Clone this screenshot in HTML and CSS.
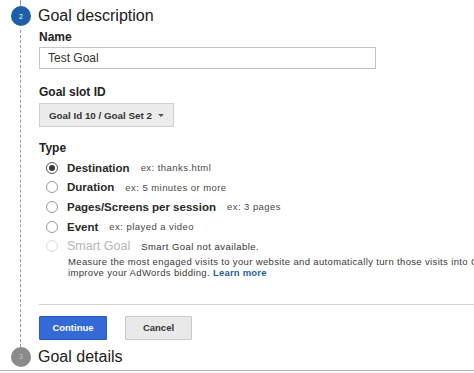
FILE: index.html
```html
<!DOCTYPE html>
<html>
<head>
<meta charset="utf-8">
<link rel="stylesheet" href="styles.css">
</head>
<body>
<div class="page">
  <div class="lead"></div>
  <div class="step-head">
    <span class="dot dot-active">2</span>
    <span class="step-title">Goal description</span>
  </div>
  <div class="step-body">
    <div class="field-label first">Name</div>
    <div class="input">Test Goal</div>
    <div class="field-label">Goal slot ID</div>
    <div class="select">Goal Id 10 / Goal Set 2 <span class="caret"></span></div>
    <div class="field-label type-label">Type</div>
    <div class="radios">
      <div class="radio-row"><span class="radio checked"></span><span class="rlabel">Destination</span><span class="hint">ex: thanks.html</span></div>
      <div class="radio-row"><span class="radio"></span><span class="rlabel">Duration</span><span class="hint">ex: 5 minutes or more</span></div>
      <div class="radio-row"><span class="radio"></span><span class="rlabel">Pages/Screens per session</span><span class="hint">ex: 3 pages</span></div>
      <div class="radio-row"><span class="radio"></span><span class="rlabel">Event</span><span class="hint">ex: played a video</span></div>
      <div class="radio-row disabled"><span class="radio"></span><span class="rlabel">Smart Goal</span><span class="hint dark">Smart Goal not available.</span></div>
    </div>
    <p class="desc">Measure the most engaged visits to your website and automatically turn those visits into Goals.<br>improve your AdWords bidding. <a class="link">Learn more</a></p>
    <div class="rule"></div>
    <div class="buttons">
      <button class="btn btn-primary">Continue</button>
      <button class="btn btn-secondary">Cancel</button>
    </div>
  </div>
  <div class="step-head step-next">
    <span class="dot dot-muted">3</span>
    <span class="step-title">Goal details</span>
  </div>
  <div class="bottom-rule"></div>
</div>
</body>
</html>
```
FILE: styles.css
```css
html, body {
  margin: 0;
  padding: 0;
  background: #fff;
  overflow: hidden;
}
body {
  font-family: "Liberation Sans", Arial, sans-serif;
  color: #222;
  width: 474px;
  height: 373px;
}
.page {
  width: 474px;
}
.lead {
  height: 6px;
  margin-left: 20px;
  border-left: 1px dashed #9a9a9a;
}
.step-head {
  display: flex;
  align-items: center;
  height: 20px;
  padding-left: 11px;
  gap: 7px;
}
.dot {
  width: 20px;
  height: 20px;
  border-radius: 50%;
  display: flex;
  align-items: center;
  justify-content: center;
  color: #fff;
  font-size: 7px;
  flex: none;
}
.dot-active {
  background: #1d5fa8;
}
.dot-muted {
  background: #8a8a8a;
  color: #c8c8c8;
}
.step-title {
  font-size: 16px;
  color: #202020;
  line-height: 20px;
}
.step-body {
  margin-left: 20px;
  border-left: 1px dashed #9a9a9a;
  padding-left: 18px;
  padding-bottom: 7px;
}
.field-label {
  font-size: 12px;
  font-weight: bold;
  color: #222;
  margin-top: 16px;
  line-height: 14px;
}
.field-label.first {
  margin-top: 4px;
}
.input {
  margin-top: 3px;
  width: 327px;
  height: 20px;
  border: 1px solid #c4c4c4;
  font-size: 12px;
  line-height: 20px;
  padding-left: 8px;
  color: #333;
}
.select {
  margin-top: 4px;
  display: inline-flex;
  align-items: center;
  height: 22px;
  padding: 0 9px;
  border: 1px solid #cfcfcf;
  background: #ececec;
  font-size: 9.8px;
  font-weight: bold;
  color: #333;
  gap: 6px;
}
.caret {
  width: 0;
  height: 0;
  border-left: 3px solid transparent;
  border-right: 3px solid transparent;
  border-top: 3px solid #555;
}
.type-label {
  margin-top: 14px;
}
.radios {
  margin-top: 3px;
  padding-left: 7px;
}
.radio-row {
  display: flex;
  align-items: center;
  height: 19.6px;
}
.radio {
  width: 10px;
  height: 10px;
  border: 1px solid #9b9b9b;
  border-radius: 50%;
  margin-right: 9px;
  position: relative;
  flex: none;
}
.radio.checked {
  border-color: #555;
}
.radio.checked::after {
  content: "";
  position: absolute;
  left: 2px;
  top: 2px;
  width: 6px;
  height: 6px;
  border-radius: 50%;
  background: #3a3a3a;
}
.rlabel {
  font-size: 11.5px;
  font-weight: bold;
  color: #2a2a2a;
  margin-right: 11px;
}
.hint {
  font-size: 9.5px;
  color: #4a4a4a;
  letter-spacing: 0.45px;
}
.disabled .radio {
  border-color: #dadada;
}
.disabled .rlabel {
  color: #b5b5b5;
  font-weight: normal;
  font-size: 12.5px;
}
.hint.dark {
  color: #333;
}
.desc {
  margin: 0 0 0 29px;
  font-size: 9.5px;
  line-height: 11px;
  color: #3a3a3a;
  letter-spacing: 0.35px;
  white-space: nowrap;
}
.link {
  color: #1d5f9a;
  font-weight: bold;
  letter-spacing: 0.2px;
}
.rule {
  margin-top: 26px;
  margin-right: -20px;
  border-top: 1px solid #d4d4d4;
}
.buttons {
  display: flex;
  gap: 18px;
  margin-top: 11px;
}
.btn {
  height: 24px;
  font-family: "Liberation Sans", Arial, sans-serif;
  font-size: 9.5px;
  font-weight: bold;
  border-radius: 1px;
  padding: 0;
}
.btn-primary {
  width: 68px;
  background: #3469d8;
  border: 1px solid #2d5cc0;
  color: #fff;
}
.btn-secondary {
  width: 67px;
  background: #e9e9e9;
  border: 1px solid #c8c8c8;
  color: #333;
}
.bottom-rule {
  margin-top: 3px;
  border-top: 1px solid #b8b8b8;
}
```
